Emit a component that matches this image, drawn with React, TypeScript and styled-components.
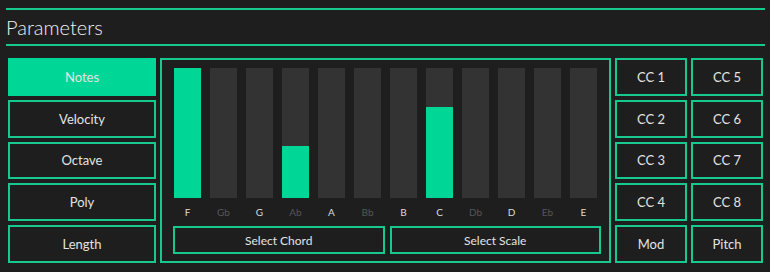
import styled, { createGlobalStyle } from "styled-components";

const accent = "#00d796";
const line = "#17c98e";

const GlobalStyle = createGlobalStyle`
    html, body {
        margin: 0;
        padding: 0;
        background: #1e1e1e;
    }
    body {
        font-family: "Lato", "Noto Sans", sans-serif;
        color: #e6e6e6;
    }
`;

const Page = styled.div`
    width: 770px;
    height: 272px;
    box-sizing: border-box;
    padding: 8px 5px 0 6px;
`;

const Header = styled.div`
    height: 34px;
    border-top: 2px solid ${line};
    border-bottom: 2px solid ${line};
    display: flex;
    align-items: center;
    font-size: 20px;
    font-weight: 300;
    color: #f0f0f0;
`;

const Main = styled.div`
    margin: 12px 2px 0 2px;
    height: 205px;
    display: grid;
    grid-template-columns: 148px 451px 148px;
    gap: 4px;
`;

const Column = styled.div<{ $cols?: number }>`
    display: grid;
    grid-template-columns: repeat(${({ $cols }) => $cols || 1}, 1fr);
    grid-template-rows: repeat(5, 1fr);
    gap: 4px;
`;

const Tab = styled.div<{ $active?: boolean }>`
    box-sizing: border-box;
    display: flex;
    align-items: center;
    justify-content: center;
    font-size: 13px;
    color: #e4e4e4;
    background: ${({ $active }) => ($active ? accent : "transparent")};
    border: 2px solid ${({ $active }) => ($active ? accent : line)};
`;

const Panel = styled.div`
    box-sizing: border-box;
    border: 2px solid ${line};
    padding-top: 8px;
    display: flex;
    flex-direction: column;
`;

const Bars = styled.div`
    display: grid;
    grid-template-columns: repeat(12, 27px);
    gap: 9px;
    padding: 0 12px;
`;

const Bar = styled.div`
    height: 130px;
    background: #333333;
    display: flex;
    align-items: flex-end;
`;

const Fill = styled.div`
    width: 100%;
    background: ${accent};
`;

const Label = styled.div<{ $dim?: boolean }>`
    height: 28px;
    display: flex;
    align-items: center;
    justify-content: center;
    font-size: 10px;
    color: ${({ $dim }) => ($dim ? "#565656" : "#dcdcdc")};
`;

const Actions = styled.div`
    display: grid;
    grid-template-columns: 1fr 1fr;
    gap: 5px;
    padding: 0 8px 0 11px;
`;

const ActionButton = styled.div`
    box-sizing: border-box;
    height: 28px;
    border: 2px solid ${line};
    display: flex;
    align-items: center;
    justify-content: center;
    font-size: 12px;
    color: #e4e4e4;
`;

const tabs = ["Notes", "Velocity", "Octave", "Poly", "Length"];

const notes = [
    { name: "F", level: 100 },
    { name: "Gb", level: 0, dim: true },
    { name: "G", level: 0 },
    { name: "Ab", level: 40, dim: true },
    { name: "A", level: 0 },
    { name: "Bb", level: 0, dim: true },
    { name: "B", level: 0 },
    { name: "C", level: 70 },
    { name: "Db", level: 0, dim: true },
    { name: "D", level: 0 },
    { name: "Eb", level: 0, dim: true },
    { name: "E", level: 0 },
];

const controls = ["CC 1", "CC 5", "CC 2", "CC 6", "CC 3", "CC 7", "CC 4", "CC 8", "Mod", "Pitch"];

export default function App() {
    return (
        <>
            <GlobalStyle />
            <Page>
                <Header>Parameters</Header>
                <Main>
                    <Column>
                        {tabs.map((t, i) => (
                            <Tab key={t} $active={i === 0}>
                                {t}
                            </Tab>
                        ))}
                    </Column>
                    <Panel>
                        <Bars>
                            {notes.map((n) => (
                                <div key={n.name}>
                                    <Bar>
                                        <Fill style={{ height: `${n.level}%` }} />
                                    </Bar>
                                    <Label $dim={n.dim}>{n.name}</Label>
                                </div>
                            ))}
                        </Bars>
                        <Actions>
                            <ActionButton>Select Chord</ActionButton>
                            <ActionButton>Select Scale</ActionButton>
                        </Actions>
                    </Panel>
                    <Column $cols={2}>
                        {controls.map((c) => (
                            <Tab key={c}>{c}</Tab>
                        ))}
                    </Column>
                </Main>
            </Page>
        </>
    );
}
